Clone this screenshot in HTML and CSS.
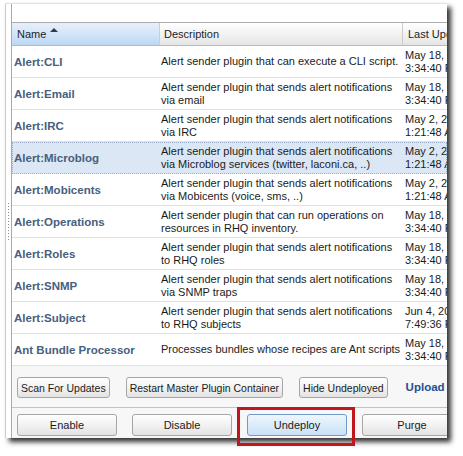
FILE: index.html
```html
<!DOCTYPE html>
<html>
<head>
<meta charset="utf-8">
<link rel="stylesheet" href="styles.css">
</head>
<body>
<div class="frame">
  <div class="splitter"><span class="grip"></span></div>
  <div class="main">
    <div class="topspace"></div>
    <div class="ghead">
      <div class="hcell sorted">Name<span class="arrow"></span></div>
      <div class="hcell">Description</div>
      <div class="hcell">Last Updated</div>
    </div>
    <div class="row">
      <div class="c-name">Alert:CLI</div>
      <div class="c-desc">Alert sender plugin that can execute a CLI script.</div>
      <div class="c-date">May 18, 2010<br>3:34:40 PM</div>
    </div>
    <div class="row">
      <div class="c-name">Alert:Email</div>
      <div class="c-desc">Alert sender plugin that sends alert notifications<br>via email</div>
      <div class="c-date">May 18, 2010<br>3:34:40 PM</div>
    </div>
    <div class="row">
      <div class="c-name">Alert:IRC</div>
      <div class="c-desc">Alert sender plugin that sends alert notifications<br>via IRC</div>
      <div class="c-date">May 2, 2010<br>1:21:48 AM</div>
    </div>
    <div class="row sel">
      <div class="c-name">Alert:Microblog</div>
      <div class="c-desc">Alert sender plugin that sends alert notifications<br>via Microblog services (twitter, laconi.ca, ..)</div>
      <div class="c-date">May 2, 2010<br>1:21:48 AM</div>
    </div>
    <div class="row">
      <div class="c-name">Alert:Mobicents</div>
      <div class="c-desc">Alert sender plugin that sends alert notifications<br>via Mobicents (voice, sms, ..)</div>
      <div class="c-date">May 2, 2010<br>1:21:48 AM</div>
    </div>
    <div class="row">
      <div class="c-name">Alert:Operations</div>
      <div class="c-desc">Alert sender plugin that can run operations on<br>resources in RHQ inventory.</div>
      <div class="c-date">May 18, 2010<br>3:34:40 PM</div>
    </div>
    <div class="row">
      <div class="c-name">Alert:Roles</div>
      <div class="c-desc">Alert sender plugin that sends alert notifications<br>to RHQ roles</div>
      <div class="c-date">May 18, 2010<br>3:34:40 PM</div>
    </div>
    <div class="row">
      <div class="c-name">Alert:SNMP</div>
      <div class="c-desc">Alert sender plugin that sends alert notifications<br>via SNMP traps</div>
      <div class="c-date">May 18, 2010<br>3:34:40 PM</div>
    </div>
    <div class="row">
      <div class="c-name">Alert:Subject</div>
      <div class="c-desc">Alert sender plugin that sends alert notifications<br>to RHQ subjects</div>
      <div class="c-date">Jun 4, 2010<br>7:49:36 PM</div>
    </div>
    <div class="row">
      <div class="c-name">Ant Bundle Processor</div>
      <div class="c-desc">Processes bundles whose recipes are Ant scripts</div>
      <div class="c-date">May 18, 2010<br>3:34:40 PM</div>
    </div>
    <div class="toolbar">
      <button class="btn tb">Scan For Updates</button>
      <button class="btn tb">Restart Master Plugin Container</button>
      <button class="btn tb">Hide Undeployed</button>
      <span class="upload">Upload</span>
    </div>
    <div class="actions">
      <button class="btn act">Enable</button>
      <button class="btn act">Disable</button>
      <button class="btn act hot">Undeploy</button>
      <button class="btn act">Purge</button>
    </div>
  </div>
</div>
<div class="callout"></div>
</body>
</html>
```

FILE: styles.css
```css
html, body {
  margin: 0;
  padding: 0;
  background: #ffffff;
}

body {
  width: 463px;
  height: 456px;
  overflow: hidden;
  font-family: "Liberation Sans", Arial, sans-serif;
  font-size: 11px;
  color: #1b1b1b;
}

.frame {
  margin: 3px 0 0 5px;
  width: 442px;
  height: 435px;
  box-sizing: border-box;
  border-top: 1px solid #e2e2e2;
  border-left: 1px solid #cbcbcb;
  background: #ffffff;
  box-shadow: 4px 4px 5px rgba(0, 0, 0, 0.8);
  display: flex;
}

.splitter {
  width: 5px;
  flex: none;
  display: flex;
  align-items: center;
  justify-content: center;
}

.grip {
  width: 1px;
  height: 37px;
  background: repeating-linear-gradient(to bottom, #8c8c8c 0 1px, transparent 1px 3px);
}

.main {
  flex: 1;
  min-width: 0;
  border-left: 1px solid #a9a9a9;
  display: flex;
  flex-direction: column;
  overflow: hidden;
}

.topspace {
  height: 18px;
  flex: none;
}

.ghead {
  flex: none;
  display: grid;
  grid-template-columns: 148px 243px 120px;
  height: 24px;
  box-sizing: border-box;
  border-top: 1px solid #acacac;
  border-bottom: 1px solid #bababa;
}

.hcell {
  display: flex;
  align-items: center;
  padding-left: 5px;
  box-sizing: border-box;
  border-right: 1px solid #cdcdcd;
  background: linear-gradient(to bottom, #ffffff, #f1f1f1 55%, #e4e4e4);
  white-space: nowrap;
  color: #1e1e1e;
}

.hcell:nth-child(2) {
  padding-left: 4px;
}

.hcell.sorted {
  background: linear-gradient(to bottom, #e6f0fb, #d3e5f8 50%, #bdd7f2);
}

.arrow {
  align-self: flex-start;
  margin: 5px 0 0 4px;
  width: 0;
  height: 0;
  border-left: 4px solid transparent;
  border-right: 4px solid transparent;
  border-bottom: 4px solid #333a44;
}

.row {
  flex: none;
  display: grid;
  grid-template-columns: 148px 243px 120px;
  height: 32px;
  box-sizing: border-box;
  border-bottom: 1px solid #e2e2e2;
  align-items: center;
  background: #ffffff;
}

.row.sel {
  background: #dce7f5;
  outline: 1px dotted #9aaecb;
  outline-offset: -1px;
}

.c-name {
  padding-left: 2px;
  font-weight: bold;
  font-size: 11.5px;
  color: #47607d;
  white-space: nowrap;
}

.c-desc {
  padding-left: 1px;
  line-height: 13px;
  color: #1b1b1b;
}

.c-date {
  padding-left: 2px;
  line-height: 13px;
  white-space: nowrap;
  color: #1b1b1b;
}

.toolbar {
  flex: none;
  height: 42px;
  box-sizing: border-box;
  padding: 11px 0 0 5px;
  display: flex;
  align-items: flex-start;
  gap: 16px;
  background: #f7f7f7;
  border-bottom: 1px solid #c3c3c3;
}

.actions {
  flex: 1;
  box-sizing: border-box;
  padding: 6px 0 0 5px;
  display: flex;
  align-items: flex-start;
  gap: 15px;
  background: #f7f7f7;
}

.btn {
  font-family: "Liberation Sans", Arial, sans-serif;
  font-size: 11px;
  color: #1b1b1b;
  border: 1px solid #a6a6a6;
  border-radius: 3px;
  background: linear-gradient(to bottom, #fefefe, #f2f2f2 50%, #e3e3e3);
  margin: 0;
  box-sizing: border-box;
  white-space: nowrap;
  flex: none;
}

.btn.tb {
  height: 21px;
  padding: 0 3px;
  font-size: 10.5px;
}

.btn.act {
  width: 100px;
  height: 22px;
  padding: 0;
}

.btn.hot {
  border-color: #6f9bcb;
  background: linear-gradient(to bottom, #eef6fd, #dcecfa 50%, #c9e1f6);
}

.upload {
  align-self: center;
  margin-top: -11px;
  margin-left: 2px;
  font-weight: bold;
  font-size: 11.5px;
  color: #1f4f8f;
  white-space: nowrap;
}

.callout {
  position: absolute;
  left: 237px;
  top: 407px;
  width: 118px;
  height: 39px;
  box-sizing: border-box;
  border: 3px solid #c0161c;
}
```
